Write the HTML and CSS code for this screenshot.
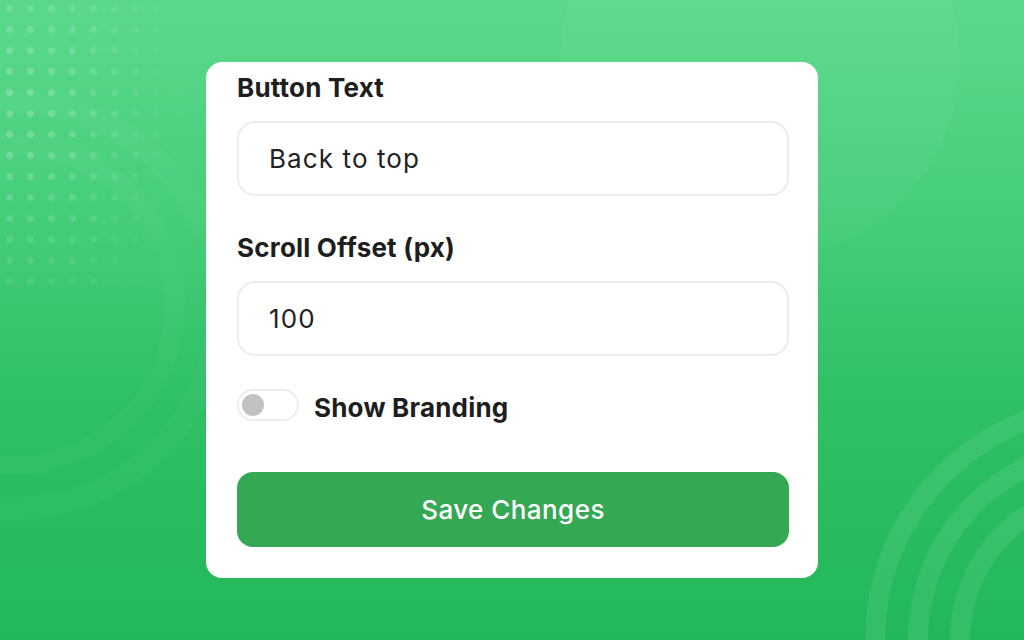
FILE: index.html
```html
<!DOCTYPE html>
<html lang="en">
<head>
<meta charset="utf-8">
<title>Settings</title>
<link rel="stylesheet" href="styles.css">
</head>
<body>
<div class="bg">
  <div class="dots"></div>
  <div class="glow glow-tr"></div>
  <div class="rings rings-left"></div>
  <div class="rings rings-br"></div>
</div>
<main class="card">
  <label class="label" for="btn-text">Button Text</label>
  <div class="input" id="btn-text">Back to top</div>
  <label class="label label-2" for="offset">Scroll Offset (px)</label>
  <div class="input" id="offset">100</div>
  <div class="toggle-row">
    <span class="toggle"><span class="knob"></span></span>
    <span class="toggle-label">Show Branding</span>
  </div>
  <button class="save">Save Changes</button>
</main>
</body>
</html>
```

FILE: styles.css
```css
* { box-sizing: border-box; }
html, body { margin: 0; padding: 0; }
body {
  width: 1024px;
  height: 640px;
  overflow: hidden;
  position: relative;
  display: flex;
  align-items: center;
  justify-content: center;
  font-family: Inter, "Noto Sans", "Liberation Sans", sans-serif;
  background: linear-gradient(180deg, #5bd98b 0%, #48cf7b 30%, #2fc064 62%, #22b85a 100%);
}
.bg {
  position: absolute;
  inset: 0;
  overflow: hidden;
  pointer-events: none;
}
.dots {
  position: absolute;
  left: 0;
  top: 0;
  width: 200px;
  height: 300px;
  background-image: radial-gradient(circle, rgba(255,255,255,0.2) 3.2px, transparent 4px);
  background-size: 21px 21px;
  background-position: -1px -2px;
  -webkit-mask-image: radial-gradient(ellipse 170px 270px at 20px 110px, #000 15%, transparent 100%);
  mask-image: radial-gradient(ellipse 170px 270px at 20px 110px, #000 15%, transparent 100%);
}
.glow-tr {
  position: absolute;
  left: 560px;
  top: -140px;
  width: 400px;
  height: 400px;
  border-radius: 50%;
  background: rgba(255,255,255,0.03);
}
.rings {
  position: absolute;
  border-radius: 50%;
}
.rings-br {
  left: 865px;
  top: 395px;
  width: 490px;
  height: 490px;
  background: radial-gradient(circle at center,
    transparent 0 140px,
    rgba(255,255,255,0.08) 140px 160px,
    transparent 160px 182px,
    rgba(255,255,255,0.08) 182px 202px,
    transparent 202px 225px,
    rgba(255,255,255,0.08) 225px 245px,
    transparent 245px);
}
.rings-left {
  left: -200px;
  top: 90px;
  width: 430px;
  height: 430px;
  background: radial-gradient(circle at center,
    transparent 0 150px,
    rgba(255,255,255,0.025) 150px 170px,
    transparent 170px 192px,
    rgba(255,255,255,0.025) 192px 215px,
    transparent 215px);
}
.card {
  position: relative;
  width: 612px;
  height: 516px;
  background: #ffffff;
  border-radius: 16px;
  padding: 10px 29px 30px 31px;
  display: flex;
  flex-direction: column;
}
.label {
  display: block;
  font-size: 26px;
  line-height: 31px;
  font-weight: 700;
  letter-spacing: 0.2px;
  color: #1e1e1e;
  margin-bottom: 18px;
}
.label-2 { margin-top: 36px; }
.input {
  height: 75px;
  border: 2px solid #ececec;
  border-radius: 18px;
  padding: 0 30px;
  display: flex;
  align-items: center;
  font-size: 26px;
  font-weight: 400;
  letter-spacing: 1.1px;
  color: #222222;
}
.toggle-row {
  display: flex;
  align-items: center;
  gap: 15px;
  margin-top: 32px;
  height: 34px;
}
.toggle {
  width: 62px;
  height: 32px;
  border: 2px solid #ececec;
  border-radius: 16px;
  background: #ffffff;
  display: flex;
  align-items: center;
  padding-left: 3px;
}
.knob {
  width: 22px;
  height: 22px;
  border-radius: 50%;
  background: #c2c2c2;
}
.toggle-label {
  font-size: 26px;
  font-weight: 700;
  letter-spacing: 0.2px;
  color: #1e1e1e;
  position: relative;
  top: 2px;
}
.save {
  margin-top: 50px;
  height: 75px;
  width: 100%;
  border: none;
  border-radius: 16px;
  background: #35a853;
  color: #ffffff;
  font-family: inherit;
  font-size: 26px;
  font-weight: 500;
  letter-spacing: 0.45px;
}
```
